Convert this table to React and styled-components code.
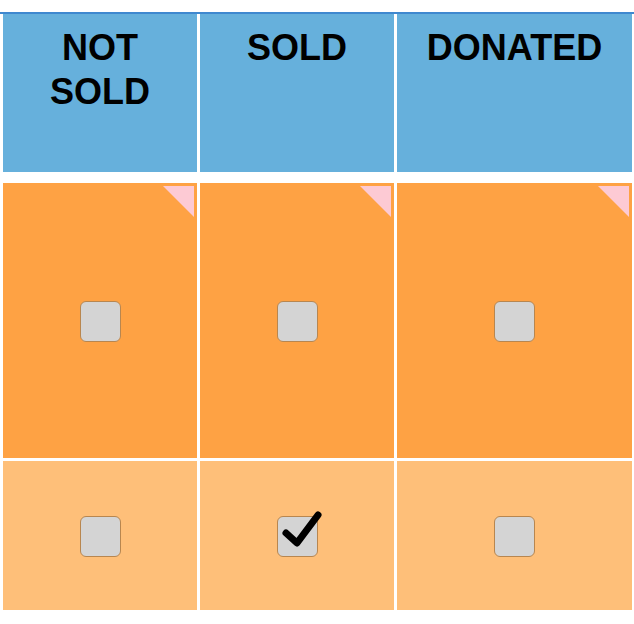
import React from "react";
import styled, { createGlobalStyle } from "styled-components";

const Global = createGlobalStyle`
  body {
    margin: 0;
    background: #fff;
    font-family: "Liberation Sans", Arial, sans-serif;
  }
`;

const Page = styled.div`
  width: 634px;
  padding-top: 12px;
`;

const TopRule = styled.div`
  height: 2px;
  background: #3f88cf;
`;

const Grid = styled.div`
  display: grid;
  grid-template-columns: 194px 194px 235px;
  grid-template-rows: 158px 286px 152px;
  column-gap: 3px;
  padding-left: 3px;
`;

const HeadCell = styled.div`
  background: #66b0dc;
  color: #000;
  font-weight: bold;
  font-size: 36px;
  line-height: 44px;
  text-align: center;
  padding: 12px 12px 0;
`;

const Cell = styled.div`
  position: relative;
  display: flex;
  align-items: center;
  justify-content: center;
  padding-top: 2px;
  background: ${(p) => (p.light ? "#febf79" : "#fea244")};
  margin-top: ${(p) => p.top}px;
`;

const Corner = styled.div`
  position: absolute;
  top: 3px;
  right: 3px;
  width: 31px;
  height: 31px;
  background: #fdcad4;
  clip-path: polygon(0 0, 100% 0, 100% 100%);
`;

const Box = styled.div`
  position: relative;
  width: 39px;
  height: 39px;
  box-sizing: content-box;
  background: #d4d4d4;
  border: 1px solid #b8864f;
  border-radius: 6px;
`;

const Check = styled.svg`
  position: absolute;
  left: 3px;
  top: -7px;
  overflow: visible;
`;

const Checkbox = ({ checked }) => (
  <Box>
    {checked && (
      <Check width="40" height="40" viewBox="0 0 40 40">
        <path
          d="M5 23 L16 33 L37 5"
          fill="none"
          stroke="#000"
          strokeWidth="7"
          strokeLinecap="round"
          strokeLinejoin="round"
        />
      </Check>
    )}
  </Box>
);

const heads = ["NOT SOLD", "SOLD", "DONATED"];

export default function App() {
  return (
    <Page>
      <Global />
      <TopRule />
      <Grid>
        {heads.map((h) => (
          <HeadCell key={h}>{h}</HeadCell>
        ))}
        {heads.map((h) => (
          <Cell key={h + "1"} top={11}>
            <Corner />
            <Checkbox />
          </Cell>
        ))}
        {heads.map((h) => (
          <Cell key={h + "2"} light top={3}>
            <Checkbox checked={h === "SOLD"} />
          </Cell>
        ))}
      </Grid>
    </Page>
  );
}
